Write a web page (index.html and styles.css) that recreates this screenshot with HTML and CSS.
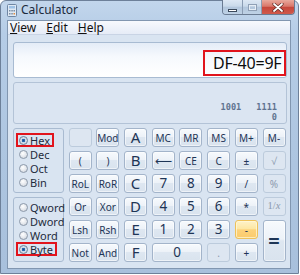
FILE: index.html
```html
<!DOCTYPE html>
<html>
<head>
<meta charset="utf-8">
<link rel="stylesheet" href="styles.css">
</head>
<body>
<div class="window">
  <div class="titlebar">
    <svg class="appicon" width="10" height="13" viewBox="0 0 10 13">
      <rect x="0.5" y="0.5" width="9" height="12" rx="1" fill="#dfe9f4" stroke="#6f86a3"/>
      <rect x="2" y="2" width="6" height="2.5" fill="#9fc2e6"/>
      <rect x="2" y="6" width="1.5" height="1.5" fill="#7b8da4"/>
      <rect x="4.3" y="6" width="1.5" height="1.5" fill="#7b8da4"/>
      <rect x="6.5" y="6" width="1.5" height="1.5" fill="#7b8da4"/>
      <rect x="2" y="9" width="1.5" height="1.5" fill="#7b8da4"/>
      <rect x="4.3" y="9" width="1.5" height="1.5" fill="#7b8da4"/>
      <rect x="6.5" y="9" width="1.5" height="1.5" fill="#e08a3c"/>
    </svg>
    <span class="title">Calculator</span>
    <div class="caption">
      <div class="cbtn cmin"><span class="minglyph"></span></div>
      <div class="cbtn cmax"><span class="maxglyph"></span></div>
      <div class="cbtn cclose">
        <svg width="12" height="9" viewBox="0 0 12 9">
          <path d="M2 1 L10 8 M10 1 L2 8" stroke="#5a2a25" stroke-width="3.2" stroke-linecap="round"/>
          <path d="M2 1 L10 8 M10 1 L2 8" stroke="#ffffff" stroke-width="1.8" stroke-linecap="round"/>
        </svg>
      </div>
    </div>
  </div>
  <div class="client">
    <div class="menubar">
      <span class="menu"><u>V</u>iew</span>
      <span class="menu"><u>E</u>dit</span>
      <span class="menu"><u>H</u>elp</span>
    </div>
    <div class="content">
      <div class="display">
        <span class="expr">DF-40=9F</span>
      </div>
      <div class="bits">
        <div class="bitline"><span>1001</span><span>1111</span></div>
        <div class="bitline"><span>0</span></div>
      </div>
      <div class="pad">
        <div class="group g1">
          <div class="radio mark"><span class="dot on"></span>Hex</div>
          <div class="radio"><span class="dot"></span>Dec</div>
          <div class="radio"><span class="dot"></span>Oct</div>
          <div class="radio"><span class="dot"></span>Bin</div>
        </div>
        <div class="group g2">
          <div class="radio"><span class="dot"></span>Qword</div>
          <div class="radio"><span class="dot"></span>Dword</div>
          <div class="radio"><span class="dot"></span>Word</div>
          <div class="radio mark"><span class="dot on"></span>Byte</div>
        </div>

        <div class="key off"></div>
        <div class="key sm">Mod</div>
        <div class="key big">A</div>
        <div class="key sm">MC</div>
        <div class="key sm">MR</div>
        <div class="key sm">MS</div>
        <div class="key sm">M+</div>
        <div class="key sm">M-</div>

        <div class="key sm">(</div>
        <div class="key sm">)</div>
        <div class="key big">B</div>
        <div class="key sm arrow">&#x27F5;</div>
        <div class="key sm">CE</div>
        <div class="key sm">C</div>
        <div class="key sm">±</div>
        <div class="key sm off">√</div>

        <div class="key sm">RoL</div>
        <div class="key sm">RoR</div>
        <div class="key big">C</div>
        <div class="key dig">7</div>
        <div class="key dig">8</div>
        <div class="key dig">9</div>
        <div class="key sm">/</div>
        <div class="key sm off">%</div>

        <div class="key sm">Or</div>
        <div class="key sm">Xor</div>
        <div class="key big">D</div>
        <div class="key dig">4</div>
        <div class="key dig">5</div>
        <div class="key dig">6</div>
        <div class="key sm">*</div>
        <div class="key sm off serif">1/<i>x</i></div>

        <div class="key sm">Lsh</div>
        <div class="key sm">Rsh</div>
        <div class="key big">E</div>
        <div class="key dig">1</div>
        <div class="key dig">2</div>
        <div class="key dig">3</div>
        <div class="key sm hot">-</div>
        <div class="key eq">=</div>

        <div class="key sm">Not</div>
        <div class="key sm">And</div>
        <div class="key big">F</div>
        <div class="key dig zero">0</div>
        <div class="key sm off">.</div>
        <div class="key sm">+</div>
      </div>
    </div>
  </div>
</div>
</body>
</html>
```
FILE: styles.css
```css
* { box-sizing: border-box; }
html, body { margin: 0; padding: 0; background: #ffffff; }
body { width: 300px; height: 275px; overflow: hidden; font-family: "Noto Sans", "Open Sans", sans-serif; }

.window {
  width: 299px;
  height: 274px;
  background: linear-gradient(to bottom, #c2d6ec 0%, #b5cce6 12%, #adc5e0 60%, #a8c0dc 100%);
  border: 1px solid #6d8099;
  border-radius: 6px 6px 0 0;
  display: flex;
  flex-direction: column;
  padding: 0 7px 4px 6px;
}

.titlebar {
  height: 19px;
  display: flex;
  align-items: flex-start;
  position: relative;
}
.appicon { margin-top: 3px; margin-left: 0; }
.title {
  font-size: 12px;
  color: #1b2a3c;
  margin-left: 4px;
  margin-top: 2px;
  line-height: 14px;
}
.caption {
  margin-left: auto;
  margin-right: -4px;
  margin-top: -1px;
  display: flex;
  height: 15px;
  border: 1px solid #6a7b92;
  border-top: none;
  border-radius: 0 0 4px 4px;
  overflow: hidden;
}
.cbtn { height: 14px; display: flex; align-items: center; justify-content: center; }
.cmin, .cmax {
  width: 20px;
  background: linear-gradient(to bottom, #dde8f4 0%, #c9d9ea 45%, #b2c6dc 50%, #bfd2e6 100%);
  border-right: 1px solid #8a9cb3;
}
.cmax { width: 19px; }
.minglyph {
  width: 9px; height: 3px; margin-top: 6px;
  background: #ffffff; border: 1px solid #3c4a5c;
}
.maxglyph {
  width: 9px; height: 7px;
  border: 1px solid #8fa0b6;
  box-shadow: inset 0 0 0 1px #e6eef6;
}
.cclose {
  width: 32px;
  background: linear-gradient(to bottom, #e9a99c 0%, #d9776a 45%, #c6473b 52%, #d0594b 100%);
}

.client {
  flex: 1;
  background: #d9e4f1;
  border: 1px solid #8196b0;
  display: flex;
  flex-direction: column;
}
.menubar {
  height: 14px;
  background: linear-gradient(to bottom, #f7f9fd 0%, #eef2fa 50%, #e6ecf7 100%);
  border-bottom: 1px solid #c9d4e5;
  display: flex;
  align-items: center;
  font-size: 12px;
  color: #111;
  padding-left: 2px;
}
.menu { margin-right: 10px; line-height: 13px; }
.menu u { text-decoration-thickness: 1px; text-underline-offset: 1px; }

.content {
  padding: 7px 3px 0 5px;
  display: flex;
  flex-direction: column;
  gap: 4px;
}

.display {
  height: 36px;
  border: 1px solid #a8bbd2;
  border-radius: 3px;
  background: linear-gradient(to bottom, #e4ecf7 0%, #f6f9fd 40%, #ffffff 100%);
  display: flex;
  justify-content: flex-end;
  align-items: flex-end;
  padding: 0 0 1px 0;
}
.expr {
  border: 2px solid #e1141d;
  height: 26px;
  width: 83px;
  font-size: 16px;
  line-height: 22px;
  color: #0d0d0d;
  padding-left: 8px;
  letter-spacing: -0.2px;
}

.bits {
  height: 42px;
  border: 1px solid #b3c3d7;
  border-radius: 3px;
  background: #dbe5f2;
  display: flex;
  flex-direction: column;
  justify-content: flex-end;
  padding: 0 9px 1px 0;
  font-family: "DejaVu Sans Mono", monospace;
  font-weight: bold;
  font-size: 8.6px;
  color: #5f7390;
}
.bitline { display: flex; justify-content: flex-end; gap: 15px; line-height: 10px; }

.pad {
  display: grid;
  grid-template-columns: 51px repeat(8, 23px);
  grid-template-rows: repeat(6, 19px);
  column-gap: 4.7px;
  row-gap: 4px;
}

.group {
  grid-column: 1;
  border: 1px solid #a9bbd1;
  border-radius: 3px;
  padding: 3px 0 0 2px;
  display: flex;
  flex-direction: column;
}
.g1 { grid-row: 1 / span 3; padding-top: 4px; }
.g2 { grid-row: 4 / span 3; padding-top: 2px; }

.radio {
  height: 14px;
  border: 2px solid transparent;
  display: flex;
  align-items: center;
  font-size: 11px;
  color: #1e2b3c;
  padding-left: 1px;
  align-self: flex-start;
  padding-right: 2px;
}
.radio.mark { border-color: #e1141d; }
.dot {
  width: 9px; height: 9px;
  border-radius: 50%;
  border: 1px solid #8c99aa;
  background: radial-gradient(circle at 40% 35%, #ffffff 0%, #e6e9ee 50%, #c9ced6 100%);
  margin-right: 2px;
  flex: none;
}
.dot.on {
  border-color: #6c7f98;
  background: radial-gradient(circle, #1d4f8f 0%, #2f6fb5 30%, #c8d6e6 38%, #e9eef4 100%);
}

.key {
  border: 1px solid #a3b4ca;
  border-radius: 3px;
  background: linear-gradient(to bottom, #f7fafd 0%, #edf2f8 45%, #dee7f1 50%, #d9e3ee 100%);
  display: flex;
  align-items: center;
  justify-content: center;
  color: #1e3556;
  box-shadow: inset 0 0 0 1px rgba(255,255,255,0.55);
  line-height: 1;
}
.key.sm { font-size: 10px; }
.key.big { font-size: 15px; }
.key.dig { font-size: 13.5px; }
.key.arrow { font-size: 12px; font-family: "DejaVu Sans", sans-serif; }
.key.serif { font-family: "Liberation Serif", serif; font-size: 10.5px; }
.key.off {
  background: #dde6f1;
  border-color: #bccbdc;
  box-shadow: none;
  color: #8c9aae;
}
.key.hot {
  border-color: #eec15a;
  background: linear-gradient(to bottom, #fff2c8 0%, #fde7a4 45%, #fdd27a 52%, #fbcb6c 100%);
  box-shadow: inset 0 0 0 1px rgba(255,250,220,0.7);
}
.key.eq {
  grid-row: 5 / span 2;
  grid-column: 9;
  font-size: 20px;
  font-weight: bold;
}
.key.zero { grid-column: 5 / span 2; }
```
